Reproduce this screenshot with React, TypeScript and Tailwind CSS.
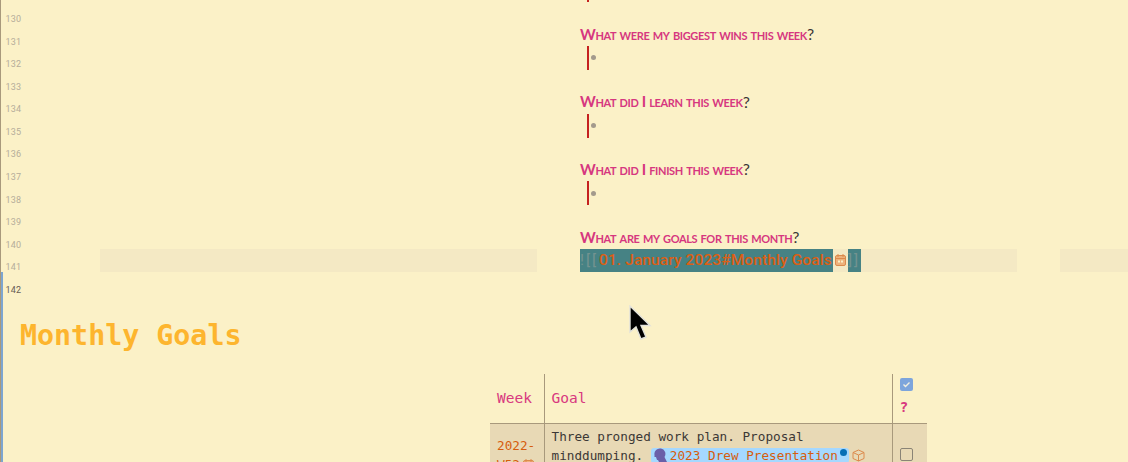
function Gutter({ n }: { n?: number }) {
  return (
    <div className="w-[99px] shrink-0 pl-[4.5px] pt-[14.5px] font-['Roboto',sans-serif] text-[9px] leading-[8px] tracking-[0.2px] text-[#b5ad9a]">
      {n}
    </div>
  );
}

function Heading({ text }: { text: string }) {
  return (
    <div className="flex h-full items-center whitespace-nowrap pb-px font-['Lato',sans-serif] text-[15px] font-bold tracking-[-0.35px] [font-variant-caps:small-caps] text-[#d6377f]">
      {text}
      <span className="text-[16px] font-normal text-[#3c3836]">?</span>
    </div>
  );
}

function Bullet() {
  return (
    <div className="flex h-full items-center pl-[7px] pt-[2px]">
      <div className="h-[24px] w-[2px] bg-[#c5221f]" />
      <div className="ml-[2px] h-[5px] w-[5px] rounded-full bg-[#a39a8c]" />
    </div>
  );
}

function Row({ n, children, active }: { n?: number; children?: React.ReactNode; active?: boolean }) {
  return (
    <div className="flex h-[22.6px]">
      <Gutter n={n} />
      <div className={`h-full w-[437px] ${active ? "bg-[#f4e9c4]" : ""}`} />
      <div className="h-full w-[43px]" />
      <div className={`h-full w-[437px] ${active ? "bg-[#f4e9c4]" : ""}`}>{children}</div>
      <div className="h-full w-[43px]" />
      <div className={`h-full flex-1 ${active ? "bg-[#f4e9c4]" : ""}`} />
    </div>
  );
}

function Embed() {
  return (
    <div className="flex h-full items-center font-['Roboto',sans-serif] text-[15.5px] font-medium">
      <div className="flex h-full w-[253px] items-center bg-[#468284] text-[#dc5f14]">
        <span className="w-[19px] font-normal tracking-[2px] text-[#739390]">![[</span>
        <span className="whitespace-nowrap tracking-[0.1px]">01. January 2023#Monthly Goals</span>
      </div>
      <div className="flex w-[15px] justify-center">
        <svg width="11" height="12" viewBox="0 0 11 12">
          <rect x="0.5" y="1.5" width="10" height="10" rx="1.5" fill="#eeb27c" stroke="#dc8a4c" />
          <path d="M0.5 4.500h10" stroke="#dc8a4c" />
          <path d="M3 0v3M8 0v3" stroke="#dc8a4c" />
          <rect x="3" y="6.500" width="2" height="2" fill="#fbf1c7" />
          <rect x="6" y="6.500" width="2" height="2" fill="#fbf1c7" />
        </svg>
      </div>
      <div className="flex h-full w-[13px] items-center bg-[#468284] font-normal tracking-[2px] text-[#739390]">]]</div>
    </div>
  );
}

function Cursor() {
  return (
    <svg className="absolute left-[628px] top-[305px]" width="24" height="36" viewBox="0 0 24 36">
      <path d="M1 1 L1 27 L7 22 L12 34 L17 32 L12 20.500 L21 20.500 Z" fill="#000" stroke="#e2e2da" strokeWidth="1.4" />
    </svg>
  );
}

export default function App() {
  return (
    <div className="relative h-[462px] w-[1128px] overflow-hidden border-l border-[#a8997c] bg-[#fbf1c7]">
      <Cursor />
      <div className="h-[271.6px] overflow-hidden">
        <div className="-mt-[22.2px]">
          <Row><Bullet /></Row>
          <Row n={130} />
          <Row n={131}><Heading text="What were my biggest wins this week" /></Row>
          <Row n={132}><Bullet /></Row>
          <Row n={133} />
          <Row n={134}><Heading text="What did I learn this week" /></Row>
          <Row n={135}><Bullet /></Row>
          <Row n={136} />
          <Row n={137}><Heading text="What did I finish this week" /></Row>
          <Row n={138}><Bullet /></Row>
          <Row n={139} />
          <Row n={140}><Heading text="What are my goals for this month" /></Row>
          <Row n={141} active><Embed /></Row>
        </div>
      </div>
      <div className="h-[190.4px] border-l-2 border-[#7da5d0]">
        <div className="pl-[2.5px] pt-[14.5px] font-['Roboto',sans-serif] text-[9px] leading-[8px] tracking-[0.2px] text-[#665c54]">142</div>
        <h1 className="mt-[25px] pl-[17px] font-['DejaVu_Sans_Mono',monospace] text-[28.3px] font-bold leading-[34px] text-[#fdb52e]">Monthly Goals</h1>
        <table className="ml-[487px] mt-[21px] w-[437px] table-fixed border-collapse font-['DejaVu_Sans_Mono',monospace] text-[12.7px] leading-[19px] text-[#3c3836]">
          <colgroup>
            <col className="w-[54px]" />
            <col className="w-[348px]" />
            <col className="w-[35px]" />
          </colgroup>
          <thead>
            <tr className="h-[49px] border-b border-[#a8997c] text-left align-middle text-[14.5px] font-normal text-[#d8397f]">
              <th className="px-[7px] font-normal">Week</th>
              <th className="border-l border-[#a8997c] px-[7px] font-normal">Goal</th>
              <th className="border-l border-[#a8997c] px-[7px] font-normal">
                <div className="-mt-[3px] flex h-[13px] w-[13px] items-center justify-center rounded-[2px] bg-[#7da5dc]">
                  <svg width="9" height="9" viewBox="0 0 9 9"><path d="M1.500 4.500l2 2 4-4" fill="none" stroke="#f2efe0" strokeWidth="1.400" /></svg>
                </div>
                <div className="mt-[8px] font-bold leading-[16px]">?</div>
              </th>
            </tr>
          </thead>
          <tbody>
            <tr className="bg-[#e8d9b5] align-top">
              <td className="px-[7px] pt-[12px] text-[#d65d0e]">
                2022-W52
                <svg className="ml-[3px] inline-block align-[-1px]" width="11" height="11" viewBox="0 0 11 11">
                  <rect x="0.5" y="1.500" width="10" height="9" rx="1.500" fill="#eeb27c" stroke="#dc8a4c" />
                  <path d="M3 0v3M8 0v3" stroke="#dc8a4c" />
                </svg>
              </td>
              <td className="border-l border-[#a8997c] px-[7px] pt-[3px]">
                Three pronged work plan. Proposal minddumping.{" "}
                <span className="relative rounded-[3px] bg-[#a5d8ff] text-[#d65d0e]">
                  <svg className="inline-block align-[-2px]" width="19" height="14" viewBox="0 0 19 14">
                    <path d="M3.500 7a5.500 5.500 0 1 1 10 2l2.500 5H8l-1-2H6l-1-3H3.500z" fill="#6a5fa8" />
                  </svg>
                  2023 Drew Presentation
                  <span className="ml-[2px] mr-[2px] inline-block h-[7px] w-[7px] -translate-y-[4px] rounded-full bg-[#076fb5]" />
                </span>
                <svg className="ml-[3px] inline-block align-[-2px]" width="13" height="13" viewBox="0 0 13 13" fill="none" stroke="#dc8a4c">
                  <path d="M6.500 1 L12 3.500 V9.500 L6.500 12 L1 9.500 V3.500 Z M1 3.500 L6.500 6 L12 3.500 M6.500 6 V12" />
                </svg>
              </td>
              <td className="border-l border-[#a8997c] px-[7px] pt-[24px]">
                <div className="h-[13px] w-[13px] rounded-[2px] border border-[#8a8476]" />
              </td>
            </tr>
          </tbody>
        </table>
      </div>
    </div>
  );
}
